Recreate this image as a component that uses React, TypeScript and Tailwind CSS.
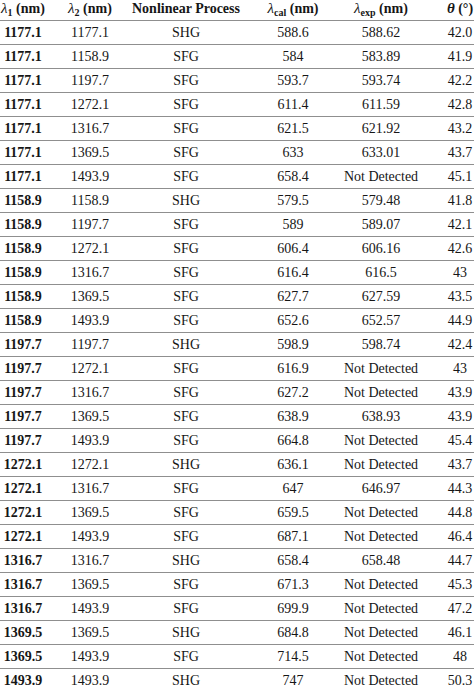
const rows: [string, string, string, string, string, string][] = [
  ["1177.1", "1177.1", "SHG", "588.6", "588.62", "42.0"],
  ["1177.1", "1158.9", "SFG", "584", "583.89", "41.9"],
  ["1177.1", "1197.7", "SFG", "593.7", "593.74", "42.2"],
  ["1177.1", "1272.1", "SFG", "611.4", "611.59", "42.8"],
  ["1177.1", "1316.7", "SFG", "621.5", "621.92", "43.2"],
  ["1177.1", "1369.5", "SFG", "633", "633.01", "43.7"],
  ["1177.1", "1493.9", "SFG", "658.4", "Not Detected", "45.1"],
  ["1158.9", "1158.9", "SHG", "579.5", "579.48", "41.8"],
  ["1158.9", "1197.7", "SFG", "589", "589.07", "42.1"],
  ["1158.9", "1272.1", "SFG", "606.4", "606.16", "42.6"],
  ["1158.9", "1316.7", "SFG", "616.4", "616.5", "43"],
  ["1158.9", "1369.5", "SFG", "627.7", "627.59", "43.5"],
  ["1158.9", "1493.9", "SFG", "652.6", "652.57", "44.9"],
  ["1197.7", "1197.7", "SHG", "598.9", "598.74", "42.4"],
  ["1197.7", "1272.1", "SFG", "616.9", "Not Detected", "43"],
  ["1197.7", "1316.7", "SFG", "627.2", "Not Detected", "43.9"],
  ["1197.7", "1369.5", "SFG", "638.9", "638.93", "43.9"],
  ["1197.7", "1493.9", "SFG", "664.8", "Not Detected", "45.4"],
  ["1272.1", "1272.1", "SHG", "636.1", "Not Detected", "43.7"],
  ["1272.1", "1316.7", "SFG", "647", "646.97", "44.3"],
  ["1272.1", "1369.5", "SFG", "659.5", "Not Detected", "44.8"],
  ["1272.1", "1493.9", "SFG", "687.1", "Not Detected", "46.4"],
  ["1316.7", "1316.7", "SHG", "658.4", "658.48", "44.7"],
  ["1316.7", "1369.5", "SFG", "671.3", "Not Detected", "45.3"],
  ["1316.7", "1493.9", "SFG", "699.9", "Not Detected", "47.2"],
  ["1369.5", "1369.5", "SHG", "684.8", "Not Detected", "46.1"],
  ["1369.5", "1493.9", "SFG", "714.5", "Not Detected", "48"],
  ["1493.9", "1493.9", "SHG", "747", "Not Detected", "50.3"],
];

const cols = "grid grid-cols-[60px_74px_118px_96px_80px_78px] items-center text-center whitespace-nowrap";

function Lambda({ sub }: { sub: string }) {
  return (
    <>
      <span className="italic font-normal text-[15px]">λ</span>
      <sub className="text-[10px] font-bold">{sub}</sub>
    </>
  );
}

export default function App() {
  return (
    <div className="w-[474px] h-[685px] overflow-hidden bg-white text-[#161616] font-['Liberation_Serif',serif] text-[14px]">
      <div className="ml-[-7px] w-[506px]">
        {/* Header */}
        <div className={`${cols} h-[21px] border-b border-[#8f8f8f] font-bold pb-[3px] leading-none`}>
          <div><Lambda sub="1" /> (nm)</div>
          <div><Lambda sub="2" /> (nm)</div>
          <div>Nonlinear Process</div>
          <div><Lambda sub="cal" /> (nm)</div>
          <div><Lambda sub="exp" /> (nm)</div>
          <div><span className="italic text-[15px]">θ</span> (°)</div>
        </div>

        {/* Body */}
        {rows.map((r, i) => (
          <div key={i} className={`${cols} h-6 border-b border-[#8f8f8f] pb-[1px]`}>
            <div className="font-bold">{r[0]}</div>
            <div>{r[1]}</div>
            <div>{r[2]}</div>
            <div>{r[3]}</div>
            <div>{r[4]}</div>
            <div>{r[5]}</div>
          </div>
        ))}
      </div>
    </div>
  );
}
